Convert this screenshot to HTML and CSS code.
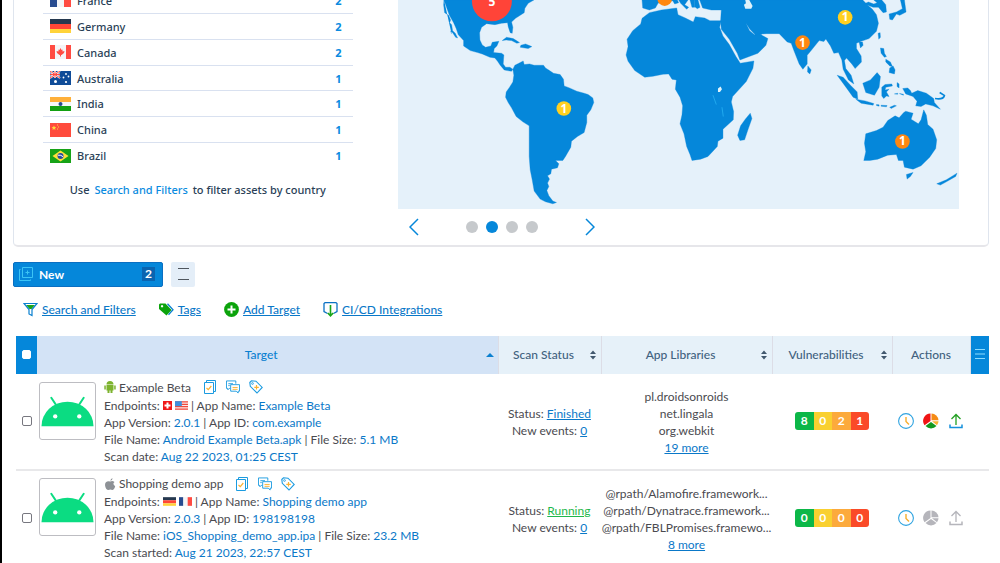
FILE: index.html
```html
<!DOCTYPE html>
<html lang="en">
<head>
  <meta charset="UTF-8">
  <title>Targets</title>
  <meta name="viewport" content="width=device-width, initial-scale=1.0">
  <link rel="stylesheet" href="styles.css">
</head>
<body>

  <!-- shared icons -->
  <svg class="sprite" aria-hidden="true">
    <symbol id="flag-fr" viewBox="0 0 21 14"><path fill="#284b8f" d="M0 0h7v14H0z"/><path fill="#f4f4f6" d="M7 0h7v14H7z"/><path fill="#ff4b42" d="M14 0h7v14h-7z"/></symbol>
    <symbol id="flag-de" viewBox="0 0 21 14"><path fill="#25384f" d="M0 0h21v5H0z"/><path fill="#ff4636" d="M0 5h21v5H0z"/><path fill="#ffd33a" d="M0 10h21v4H0z"/></symbol>
    <symbol id="flag-ca" viewBox="0 0 21 14"><path fill="#f4f4f6" d="M0 0h21v14H0z"/><path fill="#ff4b42" d="M0 0h5v14H0zM16 0h5v14h-5zM10.500 3l1 2 1-.5v2l2-.5-.5 2-2.500 2H11v1.500h-1V10H9.500L7 8l-.5-2 2 .5v-2l1 .5z"/></symbol>
    <symbol id="flag-au" viewBox="0 0 21 14"><path fill="#0f4c98" d="M0 0h21v14H0z"/><path stroke="#fff" stroke-width="2" d="M0 0l10 7M10 0L0 7M5 0v7M0 3.500h10"/><path stroke="#ff4b42" d="M0 0l10 7M10 0L0 7M5 0v7M0 3.500h10"/><g fill="#fff"><circle cx="5.500" cy="10.500" r="1.500"/><circle cx="16" cy="3" r=".9"/><circle cx="13.500" cy="6.500" r=".9"/><circle cx="18.500" cy="5.500" r=".9"/><circle cx="16" cy="11" r="1.100"/></g></symbol>
    <symbol id="flag-in" viewBox="0 0 21 14"><path fill="#ffb03a" d="M0 0h21v5H0z"/><path fill="#f4f6f8" d="M0 5h21v4H0z"/><path fill="#12a012" d="M0 9h21v5H0z"/><circle cx="10.500" cy="7" r="2" fill="#284b8f"/></symbol>
    <symbol id="flag-cn" viewBox="0 0 21 14"><path fill="#ff4b3c" d="M0 0h21v14H0z"/><path fill="#ffd83a" d="M4 2.500l.7 1.500 1.600.2-1.200 1 .3 1.700L4 6l-1.500.9.3-1.700-1.200-1 1.600-.2zM7 1.500h1v1H7zM8 3.500h1v1H8zM7 5.500h1v1H7z"/></symbol>
    <symbol id="flag-br" viewBox="0 0 21 14"><path fill="#17a317" d="M0 0h21v14H0z"/><path fill="#ffe03a" d="M10.500 1.500L18.500 7l-8 5.500L2.500 7z"/><circle cx="10.500" cy="7" r="3" fill="#284b9f"/><path stroke="#fff" fill="none" d="M8 6.200q3-.5 5 1.500"/></symbol>
    <symbol id="flag-ch" viewBox="0 0 9 9"><path fill="#f01818" d="M0 0h9v9H0z"/><path fill="#fff" d="M3.500 1.500h2v2h2v2h-2v2h-2v-2h-2v-2h2z"/></symbol>
    <symbol id="flag-us" viewBox="0 0 21 14"><path fill="#fbe8e8" d="M0 0h21v14H0z"/><path stroke="#f0483c" stroke-width="2" d="M0 1h21M0 5h21M0 9h21M0 13h21"/><path fill="#3f8fdc" d="M0 0h11v8H0z"/></symbol>
    <symbol id="i-copy" viewBox="0 0 14 14"><g fill="none" stroke="#1b9be0"><path d="M3.500 2.500V.5h9v11H10.500"/><path d="M1.500 2.500h9v11h-9z"/></g><path fill="none" stroke="#f9b233" stroke-width="1.200" d="M3.500 8l1.800 1.700L8.300 6"/></symbol>
    <symbol id="i-chat" viewBox="0 0 15 14"><g fill="none" stroke="#1b9be0"><path d="M4.500 8.500H3.500l-1.500 1.500V8.500H.5v-8h10v3"/><path d="M5 4.500h9.500v7H13V13.500l-2-2H5z"/><path d="M2.500 3.500h5M2.500 5.500h1.500"/></g><path stroke="#f9b233" d="M7 7.500h5.500M7 9.500h5.500"/></symbol>
    <symbol id="i-tag" viewBox="0 0 14 14"><path fill="none" stroke="#1b9be0" stroke-width="1.100" d="M.8 2.500L2.500.8l4.500.4 6.200 6.200L8 13 1.300 6.300z"/><circle cx="3.500" cy="3.500" r=".9" fill="none" stroke="#1b9be0" stroke-width=".8"/><path stroke="#f9b233" stroke-width="1.200" d="M7.500 5v4.500M5.300 7.300h4.500"/></symbol>
    <symbol id="i-robot" viewBox="0 0 56 56"><path fill="#0bdc82" d="M1.500 43.500a26.500 25 0 0 1 53 0z"/><path stroke="#0bdc82" stroke-width="2" stroke-linecap="round" d="M11.500 14.500l6 9M44.500 14.500l-6 9"/><circle cx="15.500" cy="33.500" r="2.200" fill="#fff"/><circle cx="40" cy="33.500" r="2.200" fill="#fff"/></symbol>
    <symbol id="i-clock" viewBox="0 0 16 16"><circle cx="8" cy="8" r="7.400" fill="#fff" stroke="#2fa3e0" stroke-width="1.100"/><path fill="none" stroke="#f7ae2c" stroke-width="1.400" d="M8 4v4.500l3 3"/></symbol>
    <symbol id="i-upload" viewBox="0 0 16 16"><path fill="none" stroke="currentColor" stroke-width="1.300" d="M8 12V1.500M3.500 6L8 1.500 12.500 6"/><path class="tray" d="M2 11.500v3h12v-3"/></symbol>
    <symbol id="i-sort" viewBox="0 0 8 10"><path fill="#41586e" d="M1 4l3-3.500L7 4zM1 6h6L4 9.500z"/></symbol>
  </svg>

  <section class="overview">
    <div class="countries">
      <ul class="country-list">
        <li><svg class="flag"><use href="#flag-fr"/></svg><span>France</span><b>2</b></li>
        <li><svg class="flag"><use href="#flag-de"/></svg><span>Germany</span><b>2</b></li>
        <li><svg class="flag"><use href="#flag-ca"/></svg><span>Canada</span><b>2</b></li>
        <li><svg class="flag"><use href="#flag-au"/></svg><span>Australia</span><b>1</b></li>
        <li><svg class="flag"><use href="#flag-in"/></svg><span>India</span><b>1</b></li>
        <li><svg class="flag"><use href="#flag-cn"/></svg><span>China</span><b>1</b></li>
        <li><svg class="flag"><use href="#flag-br"/></svg><span>Brazil</span><b>1</b></li>
      </ul>
      <p class="hint">Use <a href="#filters">Search and Filters</a> to filter assets by country</p>
    </div>

    <div class="map-side">
      <svg class="map" viewBox="9 0 1686 627" role="img" aria-label="Assets by country">
        <g fill="#0587da" stroke="#0587da" stroke-linejoin="round">
          <!-- North and Central America -->
          <path d="M147 0L146 15 149 38 161 46 167 60 164 68 170 74 173 92 181 100 188 114 182 112 173 98 167 94 170 102 M147 0 H417 L400 10 390 25 388 38 362 55 350 66 354 82 352 100 346 98 340 80 338 68 320 70 300 74 275 71 260 82 254 98 255 120 262 135 272 142 288 138 292 127 312 124 306 138 298 146 296 158 320 160 327 165 326 178 325 192 332 202 345 202 354 208 350 214 337 212 328 210 316 196 308 184 300 174 285 172 262 162 248 158 226 152 206 138 206 122 190 104 184 86 176 68 163 45z"/>
          <path d="M322 122L335 112 355 116 374 128 366 130 350 122 334 120zM378 136L392 132 411 140 400 146 376 142z"/>
          <!-- South America -->
          <path d="M354 208L360 196 372 190 385 183 388 194 404 192 418 196 446 196 452 204 464 212 476 220 496 224 506 238 508 258 524 264 546 274 568 280 580 284 594 294 597 308 588 330 576 346 576 368 568 398 548 410 530 424 528 442 512 470 504 482 482 482 492 492 488 504 470 508 468 522 458 528 464 538 458 550 462 560 456 572 462 588 474 604 485 608 474 612 452 606 436 598 418 574 412 540 406 510 403 470 403 378 384 366 364 350 350 324 340 308 332 292 334 276 344 262 354 246 357 226z"/>
          <!-- Europe -->
          <path d="M742 0H848L852 8 840 12 834 2 820 6 800 4 790 10 782 24 764 30 744 24zM852 0H880L870 14 882 22 876 28 858 10zM886 0H900V22H892z"/>
          <!-- Africa -->
          <path d="M742 55L764 38 800 30 846 24 850 44 872 54 896 66 902 50 930 54 946 62 980 62 975 82 985 108 1004 134 1024 170 1037 190 1078 183 1075 205 1055 245 1014 290 1010 306 1017 335 1016 360 985 388 985 415 970 424 968 440 940 470 918 478 892 482 886 464 876 440 868 402 856 372 862 345 864 318 856 292 842 268 845 240 832 238 822 222 805 223 775 229 750 232 720 212 700 184 694 165 700 140 697 118 714 92 738 72z"/>
        </g>
        <g transform="translate(900 0)" fill="#0587da" stroke="#0587da" stroke-linejoin="round">
          <!-- Asia -->
          <path d="M78 62L80 30 50 30 24 24 15 0H505L520 16 534 28 546 44 552 70 546 94 524 116 500 124 486 130 486 146 500 168 501 186 482 206 472 192 456 174 450 182 454 206 470 226 478 252 462 240 446 208 442 180 432 158 418 160 408 138 394 117 388 125 374 122 348 154 338 166 338 192 325 208 314 192 298 152 290 130 278 126 254 101 216 101 182 104 166 88 154 70 165 92 180 104 194 94 202 106 220 116 214 136 190 160 136 180 128 160 104 118 80 88z"/>
          <path d="M0 0H10L16 22 8 26 0 20z"/>
          <path d="M167 340L172 356 160 390 150 420 136 422 129 406 138 378 152 358zM340 198L350 210 346 222 339 216z"/>
          <!-- South-east Asia -->
          <path d="M428 226L446 232 468 256 488 276 490 298 476 292 456 264zM484 298L512 303 538 311 536 316 500 310zM505 250L528 240 548 218 558 230 554 262 540 286 514 278zM546 314l8 1v4l-8-2zM560 316l18 1-2 4-16-2zM586 322l14-6 6 2-16 8z"/>
          <path d="M562 262L572 254 592 252 594 258 574 262 572 270 584 268 576 276 584 290 576 288 568 296 562 288zM608 248l6 4v12l-6-4zM600 282l10-2v3zM615 281l12 2v3z"/>
          <path d="M558 144L568 146 570 160 576 170 570 172 560 160zM574 178l14 8 6 14-8-2-12-12zM586 204l10-6 6 12-2 12-16-4zM551 100l6-2 1 14-5 6zM494 126h10l2 10-8 8z"/>
          <path d="M625 266L640 264 648 272 652 280 670 272 696 280 718 296 720 308 738 328 716 318 694 312 680 320 664 318 668 304 656 290 634 282z"/>
          <path d="M722 296Q746 300 750 288M736 278L752 288" fill="none" stroke-width="5"/>
          <!-- Japan and Korea -->
          <path d="M508 12L522 6 538 12 548 8 538 0H562L574 14 576 36 566 38 552 22 536 22 520 16zM618 0H630L635 36 616 46 606 42 594 60 586 58 584 42 606 36 624 26z"/>
          <!-- Australia, Tasmania, New Zealand -->
          <path d="M514 402L546 392 566 382 580 362 602 348 614 354 628 338 634 334 656 340 650 358 672 372 680 360 688 330 696 346 700 374 716 388 727 420 724 446 706 472 680 498 656 508 630 502 626 482 612 482 606 464 580 466 550 478 526 482 508 482 514 456 510 430zM636 524L656 518 648 530 638 538zM727 552L756 540 788 520 784 530 756 546 738 556z"/>
        </g>
        <!-- inland water -->
        <g fill="#dff2fa">
          <path d="M1052 0h12l10 18-4 8h-18l-4-12 6-4zM970 266l8-6 4 8-6 8h-6z"/>
          <path d="M955 286l10 28M982 322l4 28" stroke="#20a9ee" stroke-width="3"/>
        </g>
        <g class="pins">
          <circle cx="291" cy="4" r="60" fill="#ff4438"/><text x="291" y="17">5</text>
          <circle cx="810" cy="-4" r="22" fill="#ff8710"/>
          <circle cx="507" cy="326" r="22" fill="#ffd020"/><text x="507" y="338">1</text>
          <circle cx="1224" cy="128" r="22" fill="#ff8710"/><text x="1224" y="140">1</text>
          <circle cx="1352" cy="52" r="22" fill="#ffd020"/><text x="1352" y="64">1</text>
          <circle cx="1524" cy="425" r="22" fill="#ff8710"/><text x="1524" y="437">1</text>
        </g>
      </svg>
      <div class="carousel">
        <button class="arrow" aria-label="Previous"><svg viewBox="0 0 10 18"><path d="M9 1L1 9l8 8"/></svg></button>
        <div class="dots">
          <button class="dot" aria-label="Slide 1"></button>
          <button class="dot active" aria-label="Slide 2"></button>
          <button class="dot" aria-label="Slide 3"></button>
          <button class="dot" aria-label="Slide 4"></button>
        </div>
        <button class="arrow" aria-label="Next"><svg viewBox="0 0 10 18"><path d="M1 1l8 8-8 8"/></svg></button>
      </div>
    </div>
  </section>

  <div class="tabs">
    <button class="tab">
      <svg viewBox="0 0 14 14"><path fill="none" stroke="#3cc4f5" d="M3.500.5h10v10h-10zM1.500 2.500h-1v11h11v-1M8.500 3.500v4M6.500 5.500h4"/></svg>
      <span>New</span><span class="count">2</span>
    </button>
    <button class="tab-menu" aria-label="Tab menu"></button>
  </div>

  <nav class="toolbar">
    <a href="#filters">
      <svg class="ico" viewBox="0 0 15 15"><path fill="#1aa51a" d="M3 3h9L8.500 7h-2z"/><path fill="none" stroke="#0b80d0" stroke-width="1.200" d="M1 1.500h13L9 7.500v6l-3-1.500V7.500z"/></svg>
      <span>Search and Filters</span></a>
    <a href="#tags">
      <svg class="ico" viewBox="0 0 15 15"><path fill="none" stroke="#0b80d0" stroke-width="1.300" d="M8.500 1.800l5.500 6-4.500 5"/><path fill="#0ca30c" fill-rule="evenodd" d="M0 2.500L1 1.500h5.500L12.500 8 7.500 13.500 0 7zM3 3a1.200 1.200 0 1 0 .1 0z"/></svg>
      <span>Tags</span></a>
    <a href="#add">
      <svg class="ico" viewBox="0 0 15 15"><circle cx="7.500" cy="7.500" r="7.400" fill="#0ca30c"/><path stroke="#fff" stroke-width="2" d="M7.500 3.500v8M3.500 7.500h8"/></svg>
      <span>Add Target</span></a>
    <a href="#cicd">
      <svg class="ico" viewBox="0 0 15 15"><path fill="none" stroke="#0b72c4" stroke-width="1.300" d="M4.500 11.500L1 9.500V1.500L2 .7h11l1 .8v8l-3.500 2"/><path fill="none" stroke="#19a519" stroke-width="1.600" d="M7.500 3v10.500M4.800 11l2.700 2.800L10.200 11"/></svg>
      <span>CI/CD Integrations</span></a>
  </nav>

  <table class="targets">
    <thead>
      <tr>
        <th class="col-check"><input type="checkbox" aria-label="Select all"></th>
        <th class="col-target"><div class="th"><span>Target</span><svg class="sort" viewBox="0 0 8 10"><path fill="#0b80d0" d="M0 7l4-4 4 4z"/></svg></div></th>
        <th class="col-status"><div class="th"><span>Scan Status</span><svg class="sort"><use href="#i-sort"/></svg></div></th>
        <th class="col-libs"><div class="th"><span>App Libraries</span><svg class="sort"><use href="#i-sort"/></svg></div></th>
        <th class="col-vulns"><div class="th"><span>Vulnerabilities</span><svg class="sort"><use href="#i-sort"/></svg></div></th>
        <th class="col-actions">Actions</th>
        <th class="col-menu"><button aria-label="Columns"><svg viewBox="0 0 10 10"><path stroke="#8fdcff" d="M0 .5h10M0 5h10M0 9.500h10"/></svg></button></th>
      </tr>
    </thead>
    <tbody>
      <tr>
        <td class="check"><input type="checkbox" aria-label="Select Example Beta"></td>
        <td>
          <div class="target">
            <svg class="thumb"><use href="#i-robot"/></svg>
            <div class="info">
              <div class="name">
                <svg class="os" viewBox="0 0 12 14"><path fill="#7db32e" d="M2.500 4.500a3.500 3.500 0 0 1 7 0zM2.500 5h7v5.500h-7zM.3 5.500h1.500v4H.3zM10.200 5.500h1.500v4h-1.500zM3.500 10h2v3h-2zM6.500 10h2v3h-2z"/></svg>
                <span>Example Beta</span>
                <button aria-label="Copy"><svg><use href="#i-copy"/></svg></button>
                <button aria-label="Comments"><svg><use href="#i-chat"/></svg></button>
                <button aria-label="Tag"><svg><use href="#i-tag"/></svg></button>
              </div>
              <div>Endpoints: <svg class="mini square"><use href="#flag-ch"/></svg> <svg class="mini"><use href="#flag-us"/></svg> | App Name: <a href="#app">Example Beta</a></div>
              <div>App Version: <a href="#ver">2.0.1</a> | App ID: <a href="#id">com.example</a></div>
              <div>File Name: <a href="#file">Android Example Beta.apk</a> | File Size: <a href="#size">5.1 MB</a></div>
              <div>Scan date: <a href="#date">Aug 22 2023, 01:25 CEST</a></div>
            </div>
          </div>
        </td>
        <td class="status">Status: <a href="#scan">Finished</a><br>New events: <a href="#events">0</a></td>
        <td class="libs">pl.droidsonroids<br>net.lingala<br>org.webkit<br><a href="#libs">19 more</a></td>
        <td><div class="vulns"><span class="low">8</span><span class="med">0</span><span class="high">2</span><span class="crit">1</span></div></td>
        <td colspan="2">
          <div class="actions">
            <button aria-label="History"><svg><use href="#i-clock"/></svg></button>
            <button aria-label="Report"><svg viewBox="0 0 16 16"><path fill="#f01414" d="M7.500 8V.5a7.500 7.500 0 0 0-6 11.800z"/><path fill="#f58a14" d="M8.500 7.300V.5a7.500 7.500 0 0 1 7 6.800z"/><path fill="#f9b233" d="M9 8.300h6.500a7 7 0 0 1-1.500 4z"/><path fill="#12991f" d="M8 9l5.500 4a7.500 7.500 0 0 1-11 0z"/></svg></button>
            <button aria-label="Upload" class="upload"><svg><use href="#i-upload"/></svg></button>
          </div>
        </td>
      </tr>
      <tr>
        <td class="check"><input type="checkbox" aria-label="Select Shopping demo app"></td>
        <td>
          <div class="target">
            <svg class="thumb"><use href="#i-robot"/></svg>
            <div class="info">
              <div class="name">
                <svg class="os" viewBox="0 0 12 14"><path fill="#8d9196" d="M8.500 1q.2 2-2 3Q6.200 1.800 8.500 1zM6.200 4.500Q8.500 3.300 10.500 5q-2.500 2 .7 4.200-1.200 4-3 3.800-2-.8-3.600 0Q1.500 13 1 8q.2-4.500 5.200-3.500z"/></svg>
                <span>Shopping demo app</span>
                <button aria-label="Copy"><svg><use href="#i-copy"/></svg></button>
                <button aria-label="Comments"><svg><use href="#i-chat"/></svg></button>
                <button aria-label="Tag"><svg><use href="#i-tag"/></svg></button>
              </div>
              <div>Endpoints: <svg class="mini"><use href="#flag-de"/></svg> <svg class="mini"><use href="#flag-fr"/></svg> | App Name: <a href="#app">Shopping demo app</a></div>
              <div>App Version: <a href="#ver">2.0.3</a> | App ID: <a href="#id">198198198</a></div>
              <div>File Name: <a href="#file">iOS_Shopping_demo_app.ipa</a> | File Size: <a href="#size">23.2 MB</a></div>
              <div>Scan started: <a href="#date">Aug 21 2023, 22:57 CEST</a></div>
            </div>
          </div>
        </td>
        <td class="status">Status: <a href="#scan" class="running">Running</a><br>New events: <a href="#events">0</a></td>
        <td class="libs">@rpath/Alamofire.framework...<br>@rpath/Dynatrace.framework...<br>@rpath/FBLPromises.framewo...<br><a href="#libs">8 more</a></td>
        <td><div class="vulns"><span class="low">0</span><span class="med">0</span><span class="high">0</span><span class="crit">0</span></div></td>
        <td colspan="2">
          <div class="actions">
            <button aria-label="History"><svg><use href="#i-clock"/></svg></button>
            <button aria-label="Report" disabled><svg viewBox="0 0 16 16"><g fill="#b5b5bb"><path d="M7.500 8V.5a7.500 7.500 0 0 0-6 11.800z"/><path d="M8.500 7.300V.5a7.500 7.500 0 0 1 7 6.800z"/><path d="M9 8.300h6.500a7 7 0 0 1-1.500 4z"/><path d="M8 9l5.500 4a7.500 7.500 0 0 1-11 0z"/></g></svg></button>
            <button aria-label="Upload" class="upload" disabled><svg><use href="#i-upload"/></svg></button>
          </div>
        </td>
      </tr>
    </tbody>
  </table>

</body>
</html>
```
FILE: styles.css
```css
* {
  box-sizing: border-box;
}

body {
  margin: 0;
  padding: 0 11px;
  border-left: 2px solid #000;
  min-height: 100vh;
  overflow: hidden;
  font-family: Lato, "Noto Sans", sans-serif;
  font-size: 12px;
  color: #4a4a4f;
  background: #fff;
}

a {
  color: #0a78c8;
  text-decoration: none;
}

button {
  padding: 0;
  border: none;
  background: none;
  font: inherit;
  cursor: pointer;
}

svg {
  display: block;
}

.sprite {
  position: absolute;
  width: 0;
  height: 0;
}

/* Overview panel */
.overview {
  display: flex;
  gap: 45px;
  padding: 0 29px;
  border: 1px solid #dfe5ee;
  border-top: none;
  border-bottom: 2px solid #e6e6ea;
  border-radius: 0 0 5px 5px;
}

.countries {
  flex: 310;
  font-family: "Noto Sans", sans-serif;
  font-size: 11px;
  font-weight: 500;
  color: #2a3f57;
}

.country-list {
  display: flex;
  flex-direction: column;
  height: 180px;
  margin: -12px 0 0;
  padding: 0;
  list-style: none;
}

.country-list li {
  display: flex;
  flex: 1;
  align-items: center;
  padding: 0 11px 0 7px;
  gap: 6px;
  border-bottom: 1px solid #d9e1f0;
}

.country-list li:last-child {
  border-bottom: none;
}

.country-list b {
  margin-left: auto;
  color: #0a8be0;
}

.flag {
  width: 21px;
  height: 14px;
}

.hint {
  margin: 14px 0 0;
  text-align: center;
  line-height: 16px;
}

.hint a {
  margin: 0 2px;
  color: #0a8be0;
}

.map-side {
  flex: 562;
}

.map {
  width: 100%;
  background: #e5f1fa;
}

.pins text {
  fill: #fff;
  font-family: "Noto Sans", sans-serif;
  font-size: 36px;
  font-weight: 700;
  text-anchor: middle;
}

.carousel {
  display: flex;
  align-items: center;
  height: 36px;
  padding-left: 11px;
  gap: 47px;
}

.arrow svg {
  width: 10px;
  height: 18px;
  fill: none;
  stroke: #0587da;
  stroke-width: 1.5;
}

.dots {
  display: flex;
  gap: 8px;
}

.dot {
  width: 12px;
  height: 12px;
  border-radius: 50%;
  background: #c6c9cc;
}

.dot.active {
  background: #0587da;
}

/* Tabs */
.tabs {
  display: flex;
  gap: 8px;
  margin-top: 15px;
}

.tab {
  display: flex;
  align-items: center;
  width: 150px;
  height: 25px;
  padding: 0 7px 0 5px;
  gap: 6px;
  border: 1px solid #0a6fc2;
  border-radius: 2px;
  background: #0587da;
  color: #fff;
  font-weight: 700;
}

.tab svg {
  width: 14px;
  height: 14px;
}

.count {
  width: 13px;
  margin-left: auto;
  line-height: 14px;
  background: #0a64b0;
}

.tab-menu {
  width: 24px;
  height: 25px;
  border-radius: 2px;
  background: #e4eef8;
}

.tab-menu::before {
  content: "";
  display: block;
  width: 11px;
  height: 10px;
  margin: 0 auto;
  border: solid #4f565e;
  border-width: 1px 0;
}

/* Toolbar */
.toolbar {
  display: flex;
  gap: 23px;
  padding: 14px 10px 0;
  line-height: 18px;
  font-weight: 500;
}

.toolbar a {
  display: flex;
  align-items: center;
  gap: 4px;
}

.toolbar span {
  text-decoration: underline;
}

.ico {
  width: 15px;
  height: 15px;
}

/* Targets table */
.targets {
  width: calc(100% - 3px);
  margin: 17px 0 0 3px;
  border-collapse: collapse;
  table-layout: fixed;
}

.targets th {
  height: 38px;
  padding: 0;
  background: #e6f1f9;
  border-right: 1px solid #dcdde6;
  font-weight: 500;
  color: #41627f;
}

.targets td {
  height: 96px;
  padding: 0;
  border-bottom: 2px solid #e8e8ea;
  line-height: 17px;
}

.targets .col-check,
.targets .col-menu {
  background: #0587da;
  border: none;
}

.targets .col-target {
  background: #d3e3f6;
  color: #0a80d0;
}

.col-check { width: 21px; }
.col-status { width: 103px; }
.col-libs { width: 171px; }
.col-vulns { width: 120px; }
.col-actions { width: 78px; }
.col-menu { width: 19px; }

.th {
  display: flex;
  align-items: center;
  padding-right: 4px;
}

.th span {
  flex: 1;
}

.sort {
  width: 8px;
  height: 10px;
}

.col-menu button,
.col-menu svg {
  width: 10px;
  height: 10px;
}

input[type="checkbox"] {
  appearance: none;
  display: block;
  width: 9px;
  height: 9px;
  margin: 0 auto;
  border: 1px solid #77777f;
  border-radius: 2px;
  background: #fff;
}

.check input {
  width: 10px;
  height: 10px;
}

.targets th input {
  border-color: #fff;
}

.target {
  display: flex;
  gap: 8px;
  padding-left: 2px;
}

.thumb {
  flex: none;
  width: 57px;
  height: 58px;
  margin-top: 4px;
  border: 1px solid #bdbdc2;
  border-radius: 3px;
}

.info {
  white-space: nowrap;
}

.name {
  display: flex;
  align-items: center;
  height: 19px;
  gap: 9px;
}

.name .os {
  width: 12px;
  height: 14px;
}

.name span {
  margin: 0 3px 0 -6px;
}

.name svg {
  width: 14px;
  height: 14px;
}

.mini {
  display: inline-block;
  width: 13px;
  height: 9px;
}

.mini.square {
  width: 9px;
}

.targets .status,
.targets .libs {
  padding-top: 2px;
  text-align: center;
  white-space: nowrap;
}

.status a,
.libs a {
  text-decoration: underline;
}

.status .running {
  color: #1fb84c;
}

.vulns {
  display: flex;
  width: 74px;
  margin: 0 auto;
  border-radius: 3px;
  overflow: hidden;
  color: #fff;
  font-weight: 700;
  line-height: 18px;
  text-align: center;
}

.vulns span {
  flex: 1;
}

.low { background: #0cb748; }
.med { background: #f9d030; }
.high { background: #fcaa3c; }
.crit { background: #fa4a28; }

.actions {
  display: flex;
  gap: 9px;
  padding-left: 6px;
}

.actions svg {
  width: 16px;
  height: 16px;
}

.upload {
  color: #22a022;
  stroke: #1490dc;
}

.tray {
  fill: none;
  stroke-width: 1.5;
}

.upload:disabled {
  color: #b5b5bb;
  stroke: #b5b5bb;
}
```
